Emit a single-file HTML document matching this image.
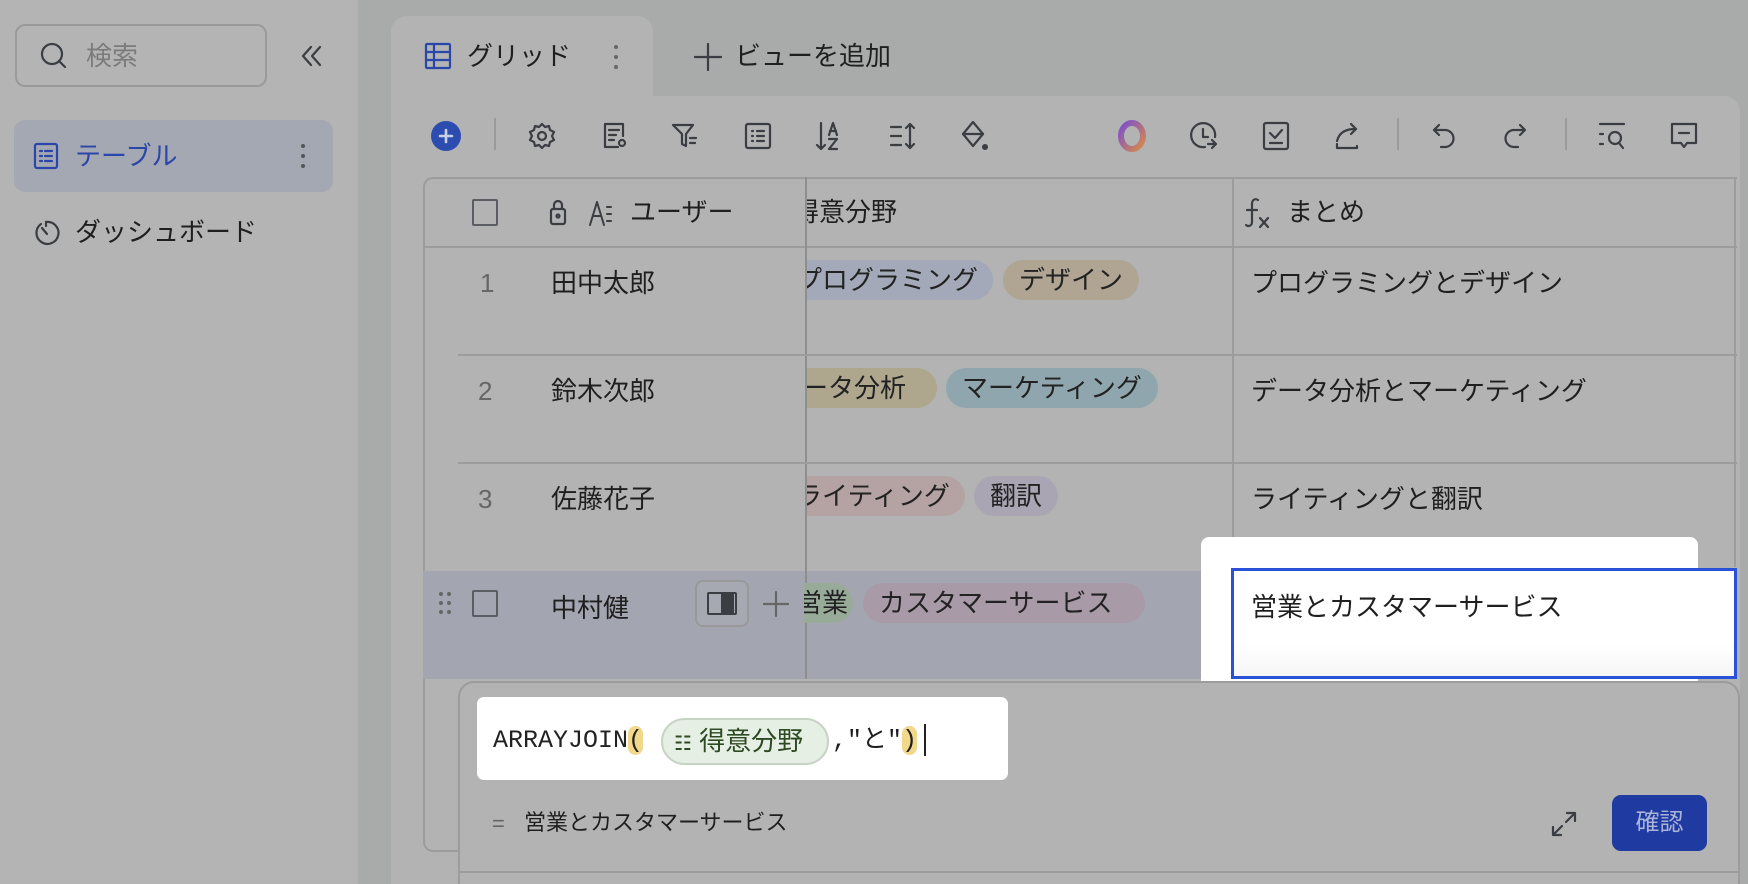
<!DOCTYPE html>
<html><head><meta charset="utf-8"><style>
*{margin:0;padding:0;box-sizing:border-box}
html{overflow:hidden;width:1748px;height:884px}
body{width:1748px;height:884px;overflow:hidden;background:#a9abaa;font-family:"Liberation Sans","Noto Sans CJK JP",sans-serif;color:#1f1f1f;position:relative}
.a{position:absolute}
.t{position:absolute;white-space:nowrap;font-size:26px;line-height:30px;font-weight:400}
.ic{position:absolute;fill:none;stroke:#3a3d42;stroke-width:2.2;stroke-linecap:round;stroke-linejoin:round}
.tag{position:absolute;height:40px;border-radius:20px;font-size:26px;line-height:40px;padding:0 16px;white-space:nowrap;color:#222}
.hl{background:#f2d88a;border-radius:8px}
</style></head><body>
<!-- sidebar -->
<div class="a" style="left:0;top:0;width:358px;height:884px;background:#b4b4b4"></div>
<div class="a" style="left:15px;top:24px;width:252px;height:63px;border:2px solid #9a9a9a;border-radius:10px"></div>
<svg class="ic" style="left:38px;top:40px" width="32" height="32" viewBox="0 0 32 32"><circle cx="14" cy="14" r="10"/><path d="M21 21l6 6"/></svg>
<div class="t" style="left:86px;top:41px;color:#7b7b7b">検索</div>
<svg class="ic" style="left:299px;top:44px" width="28" height="24" viewBox="0 0 28 24"><path d="M12 3l-8 9 8 9M21 3l-8 9 8 9"/></svg>
<div class="a" style="left:14px;top:120px;width:319px;height:72px;background:#a4a8b2;border-radius:11px"></div>
<svg class="ic" style="left:32px;top:142px;stroke:#2a46a8" width="28" height="28" viewBox="0 0 28 28"><rect x="3" y="2" width="22" height="24" rx="2"/><path d="M8 9h2M13 9h7M8 14h2M13 14h7M8 19h2M13 19h7"/></svg>
<div class="t" style="left:75px;top:141px;color:#2a46a8">テーブル</div>
<svg class="a" style="left:299px;top:142px" width="8" height="28"><circle cx="4" cy="4" r="2" fill="#555"/><circle cx="4" cy="14" r="2" fill="#555"/><circle cx="4" cy="24" r="2" fill="#555"/></svg>
<svg class="ic" style="left:32px;top:219px" width="28" height="28" viewBox="0 0 28 28"><path d="M9 5A11 11 0 1 0 14 3v0"/><path d="M14 3v4M10 9l5 6"/></svg>
<div class="t" style="left:75px;top:217px">ダッシュボード</div>

<!-- tabs -->
<div class="a" style="left:391px;top:16px;width:262px;height:100px;background:#b3b3b3;border-radius:16px 16px 0 0"></div>
<svg class="ic" style="left:424px;top:42px;stroke:#2a46a8" width="28" height="28" viewBox="0 0 28 28"><rect x="2" y="2" width="24" height="24" rx="1"/><path d="M2 10h24M2 18h24M10 2v24"/></svg>
<div class="t" style="left:467px;top:41px">グリッド</div>
<svg class="a" style="left:612px;top:43px" width="8" height="28"><circle cx="4" cy="4" r="2" fill="#666"/><circle cx="4" cy="14" r="2" fill="#666"/><circle cx="4" cy="24" r="2" fill="#666"/></svg>
<svg class="ic" style="left:694px;top:43px" width="28" height="28" viewBox="0 0 28 28"><path d="M14 1v26M1 14h26"/></svg>
<div class="t" style="left:735px;top:41px">ビューを追加</div>

<!-- card -->
<div class="a" style="left:391px;top:96px;width:1349px;height:788px;background:#b3b3b3;border-radius:0 16px 0 0"></div>
<svg class="a" style="left:431px;top:121px" width="30" height="30"><circle cx="15" cy="15" r="15" fill="#2c4cb0"/><path d="M15 9v12M9 15h12" stroke="#c9d0e6" stroke-width="2.6" stroke-linecap="round"/></svg>
<div class="a" style="left:494px;top:118px;width:2px;height:32px;background:#9a9a9a"></div>
<svg class="ic" style="left:527px;top:121px" width="30" height="30" viewBox="0 0 30 30"><circle cx="15" cy="15" r="4"/><path d="M15 3l3 3 4-1 1 4 4 2-2 4 2 4-4 2-1 4-4-1-3 3-3-3-4 1-1-4-4-2 2-4-2-4 4-2 1-4 4 1z"/></svg>
<svg class="ic" style="left:600px;top:121px" width="30" height="30" viewBox="0 0 30 30"><path d="M18 26H5V3h18v12M9 9h10M9 14h7M9 19h5"/><circle cx="22" cy="22" r="3"/></svg>
<svg class="ic" style="left:670px;top:121px" width="30" height="30" viewBox="0 0 30 30"><path d="M3 4h20l-7 9v12l-4-2V13z"/><path d="M20 17h6M20 22h5"/></svg>
<svg class="ic" style="left:743px;top:121px" width="30" height="30" viewBox="0 0 30 30"><rect x="3" y="3" width="24" height="24" rx="2"/><path d="M9 10h1M14 10h7M9 15h1M14 15h7M9 20h1M14 20h7"/></svg>
<svg class="ic" style="left:815px;top:119px" width="30" height="34" viewBox="0 0 30 34"><path d="M6 4v26M2 26l4 4 4-4"/><path d="M14 16l4-12 4 12M15 12h6M14 20h8l-8 10h8"/></svg>
<svg class="ic" style="left:888px;top:121px" width="30" height="30" viewBox="0 0 30 30"><path d="M3 6h10M3 15h10M3 24h10M22 3v24M18 7l4-4 4 4M18 23l4 4 4-4"/></svg>
<svg class="ic" style="left:959px;top:119px" width="32" height="34" viewBox="0 0 32 34"><path d="M14 3l10 12-10 12L4 15z"/><path d="M4 15h20"/><circle cx="26" cy="28" r="3" fill="#3a3d42" stroke="none"/></svg>
<svg class="a" style="left:1116px;top:120px" width="32" height="32"><defs><linearGradient id="g" x1="0" y1="0" x2="1" y2="1"><stop offset="0" stop-color="#7a4fd0"/><stop offset="1" stop-color="#d88a4a"/></linearGradient></defs><ellipse cx="16" cy="16" rx="11" ry="13" fill="none" stroke="url(#g)" stroke-width="6"/></svg>
<svg class="ic" style="left:1188px;top:120px" width="32" height="32" viewBox="0 0 32 32"><path d="M17 27A12 12 0 1 1 27 17"/><path d="M15 9v8h5M20 24h8M24 20l4 4-4 4"/></svg>
<svg class="ic" style="left:1261px;top:121px" width="30" height="30" viewBox="0 0 30 30"><rect x="3" y="2" width="24" height="26" rx="2"/><path d="M9 12l5 5 7-8M9 22h12"/></svg>
<svg class="ic" style="left:1333px;top:121px" width="30" height="30" viewBox="0 0 30 30"><path d="M4 27v-4M4 27h20v-2M4 20c2-8 8-12 18-12M18 3l5 5-5 5"/></svg>
<div class="a" style="left:1397px;top:118px;width:2px;height:32px;background:#9a9a9a"></div>
<svg class="ic" style="left:1429px;top:121px" width="30" height="30" viewBox="0 0 30 30"><path d="M10 4L5 9l5 5M5 9h11a8 8 0 0 1 0 17h-4"/></svg>
<svg class="ic" style="left:1500px;top:121px" width="30" height="30" viewBox="0 0 30 30"><path d="M20 4l5 5-5 5M25 9H14a8 8 0 0 0 0 17h4"/></svg>
<div class="a" style="left:1565px;top:118px;width:2px;height:32px;background:#9a9a9a"></div>
<svg class="ic" style="left:1597px;top:121px" width="32" height="30" viewBox="0 0 32 30"><path d="M3 3h24M3 13h3M3 23h3"/><circle cx="18" cy="17" r="6"/><path d="M22 22l4 5"/></svg>
<svg class="ic" style="left:1669px;top:121px" width="30" height="30" viewBox="0 0 30 30"><path d="M3 3h24v19H18l-3 4-3-4H3z"/><path d="M10 12h10"/></svg>

<!-- table -->
<div class="a" style="left:423px;top:177px;width:1314px;height:675px;border:2px solid #9c9c9c;border-radius:10px 0 0 10px;border-right:none"></div>
<div class="a" style="left:423px;top:246px;width:1314px;height:2px;background:#9c9c9c"></div>
<div class="a" style="left:805px;top:177px;width:2px;height:502px;background:#8e8e8e"></div>
<div class="a" style="left:1232px;top:177px;width:2px;height:390px;background:#9c9c9c"></div>
<div class="a" style="left:1734px;top:177px;width:2px;height:390px;background:#9c9c9c"></div>
<div class="a" style="left:458px;top:354px;width:1279px;height:2px;background:#9c9c9c"></div>
<div class="a" style="left:458px;top:462px;width:1279px;height:2px;background:#9c9c9c"></div>
<div class="a" style="left:472px;top:199px;width:26px;height:27px;border:2.5px solid #5a5d62;border-radius:2px"></div>
<svg class="ic" style="left:549px;top:198px" width="18" height="28" viewBox="0 0 18 28"><rect x="2" y="11" width="14" height="15" rx="2"/><path d="M5 11V7a4 4 0 0 1 8 0v4"/><circle cx="9" cy="18" r="1.5"/></svg>
<svg class="ic" style="left:588px;top:199px;stroke-width:2" width="30" height="28" viewBox="0 0 30 28"><path d="M2 26L9 3l7 23M5 17h8M19 8h4M19 15h4M19 22h4"/></svg>
<div class="t" style="left:630px;top:197px">ユーザー</div>
<div class="t" style="left:793px;top:197px;clip-path:inset(0 0 0 14px)">得意分野</div>
<svg class="ic" style="left:1244px;top:196px;stroke-width:2.2" width="30" height="34" viewBox="0 0 30 34"><path d="M14 4c-3-2-6 0-6 4v18c0 4-4 5-6 3M3 14h10M16 22l8 9M24 22l-8 9"/></svg>
<div class="t" style="left:1287px;top:197px">まとめ</div>

<div class="t" style="left:480px;top:268px;color:#666">1</div>
<div class="t" style="left:551px;top:268px">田中太郎</div>
<div class="tag" style="left:780px;top:260px;width:213px;background:#a3a9b8;clip-path:inset(0 0 0 27px)">プログラミング</div>
<div class="tag" style="left:1003px;top:260px;background:#b0a593">デザイン</div>
<div class="t" style="left:1251px;top:268px">プログラミングとデザイン</div>

<div class="t" style="left:478px;top:376px;color:#666">2</div>
<div class="t" style="left:551px;top:376px">鈴木次郎</div>
<div class="tag" style="left:760px;top:368px;width:177px;background:#aea78e;clip-path:inset(0 0 0 47px)">データ分析</div>
<div class="tag" style="left:946px;top:368px;background:#90a6ae">マーケティング</div>
<div class="t" style="left:1251px;top:376px">データ分析とマーケティング</div>

<div class="t" style="left:478px;top:484px;color:#666">3</div>
<div class="t" style="left:551px;top:484px">佐藤花子</div>
<div class="tag" style="left:780px;top:476px;width:185px;background:#b5a3a3;clip-path:inset(0 0 0 27px)">ライティング</div>
<div class="tag" style="left:974px;top:476px;background:#a9a5b3">翻訳</div>
<div class="t" style="left:1251px;top:484px">ライティングと翻訳</div>

<!-- row4 -->
<div class="a" style="left:423px;top:571px;width:810px;height:108px;background:#a3a6b0"></div>
<div class="a" style="left:805px;top:571px;width:2px;height:108px;background:#8e8e8e"></div>
<svg class="a" style="left:438px;top:591px" width="14" height="24"><g fill="#666"><circle cx="3" cy="3" r="2"/><circle cx="11" cy="3" r="2"/><circle cx="3" cy="12" r="2"/><circle cx="11" cy="12" r="2"/><circle cx="3" cy="21" r="2"/><circle cx="11" cy="21" r="2"/></g></svg>
<div class="a" style="left:472px;top:590px;width:26px;height:27px;border:2.5px solid #5a5d62;border-radius:2px"></div>
<div class="t" style="left:551px;top:593px">中村健</div>
<div class="a" style="left:695px;top:580px;width:54px;height:47px;border:2px solid #999;border-radius:8px;background:#a6a9b2"></div>
<div class="a" style="left:707px;top:592px;width:30px;height:23px;border:2.5px solid #3a3d42;border-radius:2px"></div>
<div class="a" style="left:721px;top:594px;width:13px;height:19px;background:#3a3d42"></div>
<svg class="ic" style="left:763px;top:591px;stroke:#666" width="26" height="26" viewBox="0 0 26 26"><path d="M13 1v24M1 13h24"/></svg>
<div class="tag" style="left:780px;top:583px;width:73px;background:#98ab98;clip-path:inset(0 0 0 24px)">営業</div>
<div class="tag" style="left:863px;top:583px;width:282px;background:#a99aa8">カスタマーサービス</div>

<!-- selected cell -->
<div class="a" style="left:1201px;top:537px;width:497px;height:158px;background:#fff;border-radius:8px"></div>
<div class="a" style="left:1231px;top:568px;width:506px;height:111px;border:3px solid #2a52d8;background:linear-gradient(#fff 70%,#f6f6f6)"></div>
<div class="t" style="left:1251px;top:592px">営業とカスタマーサービス</div>

<!-- formula panel -->
<div class="a" style="left:458px;top:681px;width:1282px;height:203px;background:#b3b3b3;border:2px solid #9c9c9c;border-bottom:none;border-radius:16px 16px 0 0"></div>
<div class="a" style="left:460px;top:871px;width:1278px;height:2px;background:#9c9c9c"></div>
<div class="a" style="left:477px;top:697px;width:531px;height:83px;background:#fff;border-radius:7px"></div>
<div class="t" style="left:493px;top:726px;font-family:'Liberation Mono',monospace;font-size:25px;color:#222">ARRAYJOIN<span class="hl">(</span></div>
<div class="a" style="left:661px;top:718px;width:168px;height:47px;background:#e6efe4;border:2px solid #c7d3c5;border-radius:24px"></div>
<div class="t" style="left:674px;top:726px;color:#2d4a22"><span style="font-size:20px">☷</span> 得意分野</div>
<div class="t" style="left:832px;top:726px;font-family:'Liberation Mono',monospace;font-size:25px">,"と"<span class="hl">)</span></div>
<div class="a" style="left:924px;top:724px;width:2px;height:32px;background:#222"></div>
<div class="t" style="left:492px;top:809px;font-size:22px;color:#666">=</div>
<div class="t" style="left:524px;top:808px;font-size:22px">営業とカスタマーサービス</div>
<svg class="ic" style="left:1550px;top:810px" width="28" height="28" viewBox="0 0 28 28"><path d="M17 3h8v8M25 3l-9 9M11 25H3v-8M3 25l9-9"/></svg>
<div class="a" style="left:1612px;top:795px;width:95px;height:56px;background:#1f3aa0;border-radius:9px;color:#aab4d8;font-size:24px;line-height:56px;text-align:center">確認</div>
</body></html>
